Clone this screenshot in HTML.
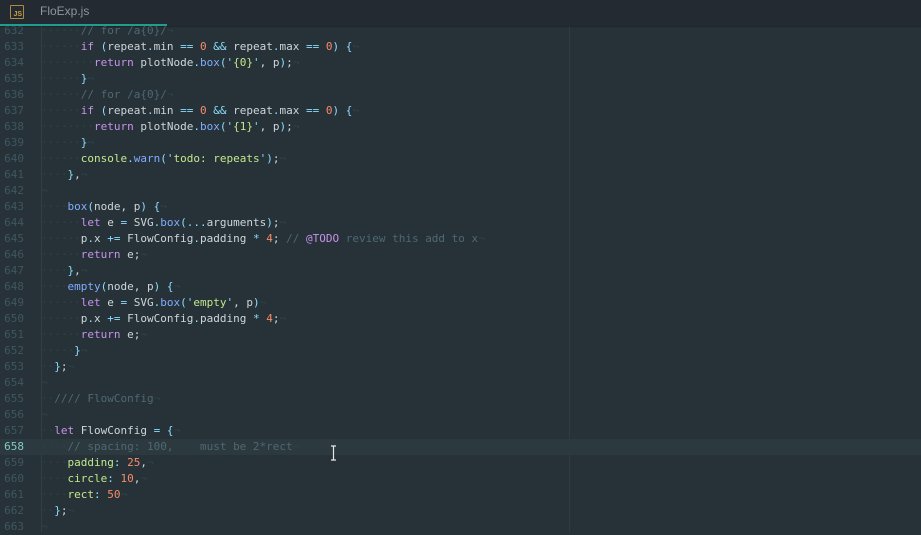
<!DOCTYPE html>
<html><head><meta charset="utf-8"><style>
html,body{margin:0;padding:0;width:921px;height:532px;overflow:hidden;background:#263238;}
.tabs{position:absolute;left:0;top:0;width:921px;height:26px;background:#232a31;box-shadow:0 1px 1px rgba(0,0,0,.25);z-index:2}
.tab{position:absolute;left:0;top:0;width:167px;height:24px;border-bottom:2px solid #1e9e8e}
.tab .ic{position:absolute;left:10px;top:5px;width:11px;height:12px;border:1px solid #b08a3a;border-radius:1px;font:bold 7px "Liberation Sans",sans-serif;color:#c9a14a;text-align:right;line-height:17px;padding-right:1px;box-sizing:content-box}
.tab .t{position:absolute;left:40px;top:4px;font:12px "Liberation Sans",sans-serif;color:#8c979d}
.ed{position:absolute;left:0;top:23px;width:921px;font:11px/16px "DejaVu Sans Mono",monospace;color:#cdd6da}
.l{height:16px;position:relative}
.n{position:absolute;left:0;width:24px;text-align:right;color:#3f5660}
.c{position:absolute;left:41px;white-space:pre}
.cur{background:#2c393f}
.cur .n{color:#80cbc4}
.w{color:#2f424a}
.k{color:#c792ea}.p{color:#89ddff}.num{color:#f78c6c}.s{color:#c3e88d}.f{color:#82aaff}.cm{color:#4f6872}.g{color:#c3e88d}
.guide{position:absolute;top:26px;bottom:0;width:1px;background:#2f3f46}
.wrap{position:absolute;left:569px;top:26px;bottom:0;width:1px;background:#2e3d44}
.ibeam{position:absolute;left:330px;top:445px;width:7px;height:16px}
</style></head><body>
<div class="tabs"><div class="tab"><div class="ic">JS</div><div class="t">FloExp.js</div></div></div>
<div class="guide" style="left:41px"></div>
<div class="wrap"></div>
<div class="ed">
<div class="l"><span class="n">632</span><span class="c"><span class="w">······</span><span class="cm">// for /a{0}/</span><span class="w">¬</span></span></div>
<div class="l"><span class="n">633</span><span class="c"><span class="w">······</span><span class="k">if</span> <span class="p">(</span>repeat<span class="p">.</span>min <span class="p">==</span> <span class="num">0</span> <span class="p">&amp;&amp;</span> repeat<span class="p">.</span>max <span class="p">==</span> <span class="num">0</span><span class="p">)</span> <span class="p">{</span><span class="w">¬</span></span></div>
<div class="l"><span class="n">634</span><span class="c"><span class="w">········</span><span class="k">return</span> plotNode<span class="p">.</span><span class="f">box</span><span class="p">(</span><span class="p">'</span><span class="s">{0}</span><span class="p">'</span>, p<span class="p">)</span>;<span class="w">¬</span></span></div>
<div class="l"><span class="n">635</span><span class="c"><span class="w">······</span><span class="p">}</span><span class="w">¬</span></span></div>
<div class="l"><span class="n">636</span><span class="c"><span class="w">······</span><span class="cm">// for /a{0}/</span><span class="w">¬</span></span></div>
<div class="l"><span class="n">637</span><span class="c"><span class="w">······</span><span class="k">if</span> <span class="p">(</span>repeat<span class="p">.</span>min <span class="p">==</span> <span class="num">0</span> <span class="p">&amp;&amp;</span> repeat<span class="p">.</span>max <span class="p">==</span> <span class="num">0</span><span class="p">)</span> <span class="p">{</span><span class="w">¬</span></span></div>
<div class="l"><span class="n">638</span><span class="c"><span class="w">········</span><span class="k">return</span> plotNode<span class="p">.</span><span class="f">box</span><span class="p">(</span><span class="p">'</span><span class="s">{1}</span><span class="p">'</span>, p<span class="p">)</span>;<span class="w">¬</span></span></div>
<div class="l"><span class="n">639</span><span class="c"><span class="w">······</span><span class="p">}</span><span class="w">¬</span></span></div>
<div class="l"><span class="n">640</span><span class="c"><span class="w">······</span><span class="g">console</span><span class="p">.</span><span class="f">warn</span><span class="p">(</span><span class="p">'</span><span class="s">todo: repeats</span><span class="p">'</span><span class="p">)</span>;<span class="w">¬</span></span></div>
<div class="l"><span class="n">641</span><span class="c"><span class="w">····</span><span class="p">}</span>,<span class="w">¬</span></span></div>
<div class="l"><span class="n">642</span><span class="c"><span class="w">¬</span></span></div>
<div class="l"><span class="n">643</span><span class="c"><span class="w">····</span><span class="f">box</span><span class="p">(</span>node, p<span class="p">)</span> <span class="p">{</span><span class="w">¬</span></span></div>
<div class="l"><span class="n">644</span><span class="c"><span class="w">······</span><span class="k">let</span> e <span class="p">=</span> SVG<span class="p">.</span><span class="f">box</span><span class="p">(</span><span class="p">...</span>arguments<span class="p">)</span>;<span class="w">¬</span></span></div>
<div class="l"><span class="n">645</span><span class="c"><span class="w">······</span>p<span class="p">.</span>x <span class="p">+=</span> FlowConfig<span class="p">.</span>padding <span class="p">*</span> <span class="num">4</span>; <span class="cm">//</span> <span class="k">@TODO</span> <span class="cm">review this add to x</span><span class="w">¬</span></span></div>
<div class="l"><span class="n">646</span><span class="c"><span class="w">······</span><span class="k">return</span> e;<span class="w">¬</span></span></div>
<div class="l"><span class="n">647</span><span class="c"><span class="w">····</span><span class="p">}</span>,<span class="w">¬</span></span></div>
<div class="l"><span class="n">648</span><span class="c"><span class="w">····</span><span class="f">empty</span><span class="p">(</span>node, p<span class="p">)</span> <span class="p">{</span><span class="w">¬</span></span></div>
<div class="l"><span class="n">649</span><span class="c"><span class="w">······</span><span class="k">let</span> e <span class="p">=</span> SVG<span class="p">.</span><span class="f">box</span><span class="p">(</span><span class="p">'</span><span class="s">empty</span><span class="p">'</span>, p<span class="p">)</span><span class="w">¬</span></span></div>
<div class="l"><span class="n">650</span><span class="c"><span class="w">······</span>p<span class="p">.</span>x <span class="p">+=</span> FlowConfig<span class="p">.</span>padding <span class="p">*</span> <span class="num">4</span>;<span class="w">¬</span></span></div>
<div class="l"><span class="n">651</span><span class="c"><span class="w">······</span><span class="k">return</span> e;<span class="w">¬</span></span></div>
<div class="l"><span class="n">652</span><span class="c"><span class="w">·····</span><span class="p">}</span><span class="w">¬</span></span></div>
<div class="l"><span class="n">653</span><span class="c"><span class="w">··</span><span class="p">}</span>;<span class="w">¬</span></span></div>
<div class="l"><span class="n">654</span><span class="c"><span class="w">¬</span></span></div>
<div class="l"><span class="n">655</span><span class="c"><span class="w">··</span><span class="cm">//// FlowConfig</span><span class="w">¬</span></span></div>
<div class="l"><span class="n">656</span><span class="c"><span class="w">¬</span></span></div>
<div class="l"><span class="n">657</span><span class="c"><span class="w">··</span><span class="k">let</span> FlowConfig <span class="p">=</span> <span class="p">{</span><span class="w">¬</span></span></div>
<div class="l cur"><span class="n">658</span><span class="c"><span class="w">····</span><span class="cm">// spacing: 100,    must be 2*rect</span><span class="w">¬</span></span></div>
<div class="l"><span class="n">659</span><span class="c"><span class="w">····</span><span class="s">padding</span><span class="p">:</span> <span class="num">25</span>,<span class="w">¬</span></span></div>
<div class="l"><span class="n">660</span><span class="c"><span class="w">····</span><span class="s">circle</span><span class="p">:</span> <span class="num">10</span>,<span class="w">¬</span></span></div>
<div class="l"><span class="n">661</span><span class="c"><span class="w">····</span><span class="s">rect</span><span class="p">:</span> <span class="num">50</span><span class="w">¬</span></span></div>
<div class="l"><span class="n">662</span><span class="c"><span class="w">··</span><span class="p">}</span>;<span class="w">¬</span></span></div>
<div class="l"><span class="n">663</span><span class="c"><span class="w">¬</span></span></div>
</div>
<svg class="ibeam" viewBox="0 0 7 16"><path d="M1 1h5M3.5 1v14M1 15h5" stroke="#e8e8e8" stroke-width="1.2" fill="none"/></svg>
</body></html>
